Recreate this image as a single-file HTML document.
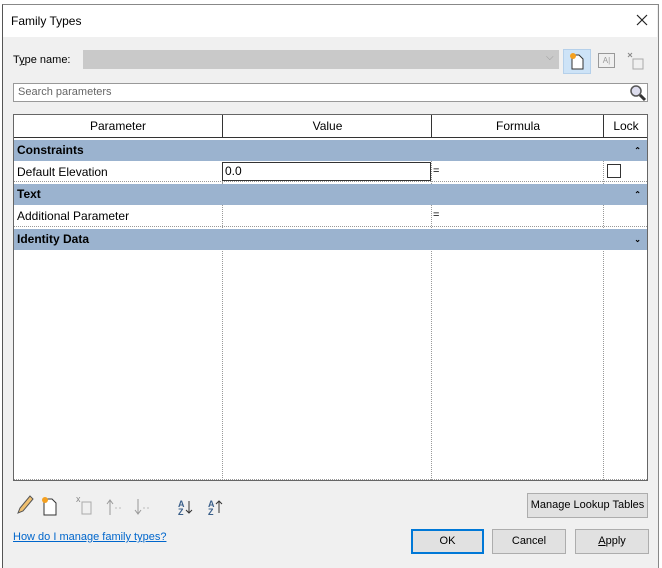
<!DOCTYPE html><html><head><style>
body{margin:0;width:662px;height:567px;background:#fff;font-family:"Liberation Sans",sans-serif;font-size:11px;color:#000;position:relative;overflow:hidden}
.a{position:absolute}
.win{left:2px;top:4px;width:655px;height:563px;background:#f0f0f0;border-left:1px solid #555;border-top:1px solid #888;border-right:1px solid #888}
.grp{background:#9bb3cf;font-weight:bold;height:21px;line-height:21px;padding-left:3px;box-sizing:border-box;font-size:12px}
.vl{border-left:1px dotted #999}
.btn{background:#e1e1e1;border:1px solid #adadad;text-align:center;box-sizing:border-box;font-size:11px;white-space:nowrap}
</style></head><body>
<div class="a win"></div>
<div class="a" style="left:3px;top:5px;width:654px;height:32px;background:#fff"></div>
<div class="a" style="left:11px;top:14px;font-size:12px">Family Types</div>
<svg class="a" style="left:636px;top:14px" width="12" height="12"><path d="M1 1l10 10M11 1L1 11" stroke="#222" stroke-width="1.2"/></svg>
<div class="a" style="left:13px;top:54px;font-size:11px">T<u>y</u>pe name:</div>
<div class="a" style="left:83px;top:50px;width:476px;height:19px;background:#c9c9c9"></div>
<div class="a" style="left:546px;top:52px;color:#999;font-size:10px">⌵</div>
<div class="a" style="left:563px;top:49px;width:26px;height:23px;background:#cde3f7;border:1px solid #b5d0ea"></div>
<svg class="a" style="left:565px;top:51px" width="22" height="20"><path d="M7 4h7l4 4v10H7z" fill="#fff" stroke="#333"/><circle cx="8" cy="5" r="3" fill="#f4a020"/></svg>
<div class="a" style="left:598px;top:53px;width:15px;height:13px;border:1px solid #999;font-size:8px;color:#999;text-align:center;line-height:13px">A|</div>
<svg class="a" style="left:625px;top:51px" width="20" height="20"><path d="M8 8h10v10H8z" fill="none" stroke="#aaa"/><path d="M3 2l4 4M7 2L3 6" stroke="#888"/></svg>
<div class="a" style="left:13px;top:83px;width:635px;height:19px;background:#fff;border:1px solid #999;box-sizing:border-box;color:#666;padding-left:4px;line-height:17px;font-size:11px">Search parameters</div>
<svg class="a" style="left:629px;top:84px" width="18" height="18"><circle cx="7" cy="7" r="5" fill="#dde" stroke="#555" stroke-width="1.5"/><path d="M11 11l5 5" stroke="#333" stroke-width="3"/></svg>
<div class="a" style="left:13px;top:114px;width:635px;height:367px;background:#fff;border:1px solid #666;box-sizing:border-box"></div>
<div class="a" style="left:14px;top:115px;width:633px;height:22px;border-bottom:1px solid #333;font-size:12px;line-height:22px">
<div class="a" style="left:0;width:208px;text-align:center">Parameter</div>
<div class="a" style="left:208px;width:209px;height:22px;border-left:1px solid #333;text-align:center">Value</div>
<div class="a" style="left:417px;width:172px;height:22px;border-left:1px solid #333;text-align:center">Formula</div>
<div class="a" style="left:589px;width:44px;height:22px;border-left:1px solid #333;text-align:center">Lock</div></div>
<div class="a vl" style="left:222px;top:182px;height:298px"></div>
<div class="a vl" style="left:431px;top:161px;height:319px"></div>
<div class="a vl" style="left:603px;top:161px;height:319px"></div>
<div class="a grp" style="left:14px;top:140px;width:633px">Constraints<span style="position:absolute;right:6px;font-size:8px">⌃</span></div>
<div class="a" style="left:17px;top:165px;font-size:12px">Default Elevation</div>
<div class="a" style="left:222px;top:162px;width:209px;height:19px;border:1px solid #333;box-sizing:border-box;padding-left:2px;line-height:17px;font-size:12px">0.0</div>
<div class="a" style="left:433px;top:165px">=</div>
<div class="a" style="left:607px;top:164px;width:12px;height:12px;border:1px solid #333"></div>
<div class="a" style="left:14px;top:181px;width:633px;border-top:1px dotted #999"></div>
<div class="a grp" style="left:14px;top:184px;width:633px">Text<span style="position:absolute;right:6px;font-size:8px">⌃</span></div>
<div class="a" style="left:17px;top:209px;font-size:12px">Additional Parameter</div>
<div class="a" style="left:433px;top:209px">=</div>
<div class="a" style="left:14px;top:226px;width:633px;border-top:1px dotted #999"></div>
<div class="a grp" style="left:14px;top:229px;width:633px">Identity Data<span style="position:absolute;right:6px;font-size:8px">⌄</span></div>
<div class="a" style="left:14px;top:479px;width:633px;border-top:1px dotted #999"></div>
<svg class="a" style="left:14px;top:493px" width="220" height="24"><path d="M4 20l2-5 10-12 3 3-10 12z" fill="#f0c070" stroke="#555"/><path d="M30 6h8l4 4v12H30z" fill="#fff" stroke="#333"/><circle cx="31" cy="7" r="3" fill="#f4a020"/><path d="M68 9h9v12h-9z" fill="none" stroke="#aaa"/><text x="62" y="9" font-size="9" fill="#888">x</text><path d="M96 8v14M93 11l3-4 3 4" stroke="#999" fill="none"/><path d="M101 15h6" stroke="#bbb" stroke-dasharray="2"/><path d="M124 6v14M121 17l3 4 3-4" stroke="#999" fill="none"/><path d="M129 15h6" stroke="#bbb" stroke-dasharray="2"/><text x="164" y="14" font-size="9" fill="#3a5f8a" font-weight="bold">A</text><text x="164" y="22" font-size="9" fill="#3a5f8a" font-weight="bold">Z</text><path d="M175 8v12M172 17l3 3 3-3" stroke="#333" fill="none"/><text x="194" y="14" font-size="9" fill="#3a5f8a" font-weight="bold">A</text><text x="194" y="22" font-size="9" fill="#3a5f8a" font-weight="bold">Z</text><path d="M205 8v12M202 11l3-3 3 3" stroke="#333" fill="none"/></svg>
<div class="a btn" style="left:527px;top:493px;width:121px;height:25px;line-height:23px">Manage Lookup Tables</div>
<div class="a" style="left:13px;top:531px;color:#06c;text-decoration:underline;font-size:11px">How do I manage family types?</div>
<div class="a btn" style="left:411px;top:529px;width:73px;height:25px;border:2px solid #0078d7;line-height:21px">OK</div>
<div class="a btn" style="left:492px;top:529px;width:74px;height:25px;line-height:23px">Cancel</div>
<div class="a btn" style="left:575px;top:529px;width:74px;height:25px;line-height:23px"><u>A</u>pply</div>
</body></html>
